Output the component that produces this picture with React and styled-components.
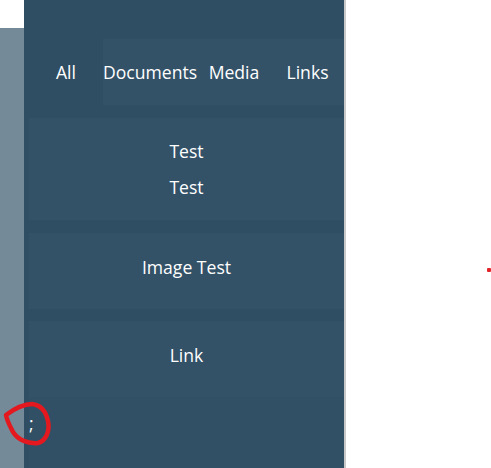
import React from 'react'
import styled, { createGlobalStyle } from 'styled-components'

const GlobalStyle = createGlobalStyle`
html, body {
    margin: 0;
    padding: 0;
    background: #fff;
}
`

const Screen = styled.div`
position: relative;
width: 491px;
height: 468px;
overflow: hidden;
display: flex;
font-family: "Open Sans", sans-serif;
font-size: 17.6px;
color: #fff;
background: #fff;
`

const Backdrop = styled.div`
width: 24px;
margin-top: 28px;
background: #748a98;
flex-shrink: 0;
`

const Panel = styled.div`
width: 315px;
flex-shrink: 0;
background: #2f4e63;
border-right: 2px solid #c9c9c9;
display: flex;
flex-direction: column;
padding: 39px 0 0 5px;
`

const Tabs = styled.div`
height: 66px;
display: flex;
align-items: center;
margin-bottom: 13px;
`

const Tab = styled.div`
width: ${props => props.$width}px;
height: 100%;
display: flex;
align-items: center;
justify-content: center;
background: ${props => (props.$active ? '#2f4e63' : '#335268')};
white-space: nowrap;
`

const Card = styled.div`
height: ${props => props.$height}px;
margin-bottom: ${props => props.$gap}px;
padding-bottom: ${props => props.$lift}px;
box-sizing: border-box;
background: #335268;
display: flex;
flex-direction: column;
align-items: center;
justify-content: center;
gap: 11px;
line-height: 25px;
`

const Footer = styled.div`
flex: 1;
background: #315066;
padding: 14px 0 0 0;
line-height: 25px;
`

const Scribble = styled.svg`
position: absolute;
left: 0;
top: 395px;
width: 56px;
height: 55px;
`

const Dot = styled.div`
position: absolute;
left: 487px;
top: 268px;
width: 4px;
height: 4px;
border-radius: 1px;
background: #e3252b;
`

function App() {
    return (
        <Screen>
            <GlobalStyle />
            <Backdrop />
            <Panel>
                <Tabs>
                    <Tab $width={74} $active>All</Tab>
                    <Tab $width={94}>Documents</Tab>
                    <Tab $width={74}>Media</Tab>
                    <Tab $width={73}>Links</Tab>
                </Tabs>
                <Card $height={102} $gap={13} $lift={0}>
                    <span>Test</span>
                    <span>Test</span>
                </Card>
                <Card $height={76} $gap={12} $lift={8}>Image Test</Card>
                <Card $height={76} $gap={0} $lift={8}>Link</Card>
                <Footer>;</Footer>
            </Panel>
            <Dot />
            <Scribble viewBox="0 0 56 55">
                <path
                    d="M6 20 C14 14 24 9 32 9 C41 10 46 17 48 26 C50 36 46 46 38 48 C28 49 18 45 13 37 C10 31 7 26 6 20 Z"
                    fill="none"
                    stroke="#e4191f"
                    strokeWidth="4.5"
                    strokeLinejoin="round"
                />
            </Scribble>
        </Screen>
    )
}

export default App
